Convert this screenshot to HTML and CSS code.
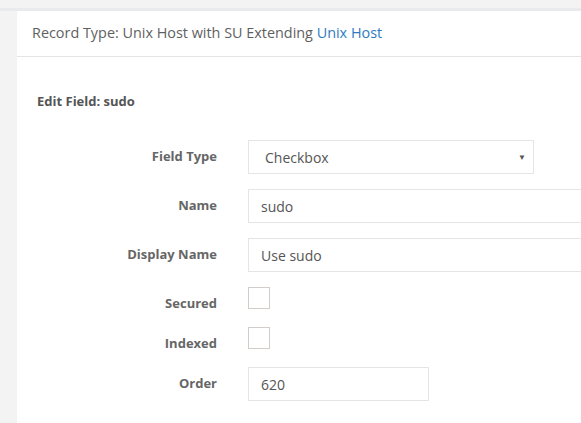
FILE: index.html
```html
<!DOCTYPE html>
<html lang="en">
<head>
    <meta charset="UTF-8">
    <meta name="viewport" content="width=device-width, initial-scale=1.0">
    <title>Edit Field</title>
    <link rel="stylesheet" href="styles.css">
</head>
<body>
    <div class="page">
        <div class="panel">
            <div class="panel-heading">
                Record Type: Unix Host with SU Extending <a href="#">Unix Host</a>
            </div>
            <div class="panel-body">
                <h4 class="edit-title">Edit Field: sudo</h4>
                <form class="field-form">
                    <label for="fieldType">Field Type</label>
                    <div class="select-wrap">
                        <select id="fieldType" class="form-control select-type">
                            <option>Checkbox</option>
                        </select>
                        <span class="caret">&#9660;</span>
                    </div>

                    <label for="name">Name</label>
                    <input type="text" id="name" class="form-control" value="sudo">

                    <label for="displayName">Display Name</label>
                    <input type="text" id="displayName" class="form-control" value="Use sudo">

                    <label for="secured">Secured</label>
                    <div><input type="checkbox" id="secured" class="check"></div>

                    <label for="indexed">Indexed</label>
                    <div><input type="checkbox" id="indexed" class="check"></div>

                    <label for="order">Order</label>
                    <div><input type="text" id="order" class="form-control order-input" value="620"></div>
                </form>
            </div>
        </div>
    </div>
</body>
</html>
```

FILE: styles.css
```css
html, body {
    margin: 0;
    padding: 0;
    background-color: #f3f3f3;
    font-family: 'Open Sans', 'Liberation Sans', sans-serif;
    color: #555;
    overflow: hidden;
}
.page {
    margin-top: 8px;
    border-top: 3px solid #e8eaed;
    padding-left: 17px;
    height: 412px;
    overflow: hidden;
}
.panel {
    background: white;
    height: 412px;
    overflow: hidden;
}
.panel-heading {
    height: 45px;
    line-height: 44px;
    padding-left: 15px;
    font-size: 14.4px;
    color: #5f5f5f;
    border-bottom: 1px solid #e5e5e5;
}
.panel-heading a {
    color: #2f7bbf;
    text-decoration: none;
}
.panel-body {
    padding: 34px 0 0 20px;
}
.edit-title {
    margin: 0;
    font-size: 13px;
    font-weight: bold;
    line-height: 20px;
    color: #555;
}
.field-form {
    margin-top: 29px;
    display: grid;
    grid-template-columns: 180px 1fr;
    column-gap: 31px;
    row-gap: 15px;
}
.field-form label {
    text-align: right;
    font-size: 13px;
    font-weight: bold;
    color: #666;
    padding-top: 8px;
    line-height: 17px;
}
.form-control {
    box-sizing: border-box;
    height: 34px;
    border: 1px solid #e5e5e5;
    border-radius: 0;
    padding: 0 12px;
    font-family: 'Open Sans', 'Liberation Sans', sans-serif;
    font-size: 14px;
    color: #555;
    background: white;
    outline: none;
    width: 400px;
}
.select-wrap {
    position: relative;
    width: 286px;
}
.select-type {
    width: 286px;
    appearance: none;
    -webkit-appearance: none;
    padding-left: 16px;
}
.caret {
    position: absolute;
    right: 8px;
    top: 11px;
    font-size: 8px;
    color: #555;
    pointer-events: none;
}
.check {
    appearance: none;
    -webkit-appearance: none;
    box-sizing: border-box;
    width: 22px;
    height: 22px;
    margin: 0;
    border: 1px solid #d2cdc9;
    background: white;
    display: block;
}
.order-input {
    width: 181px;
}
```
